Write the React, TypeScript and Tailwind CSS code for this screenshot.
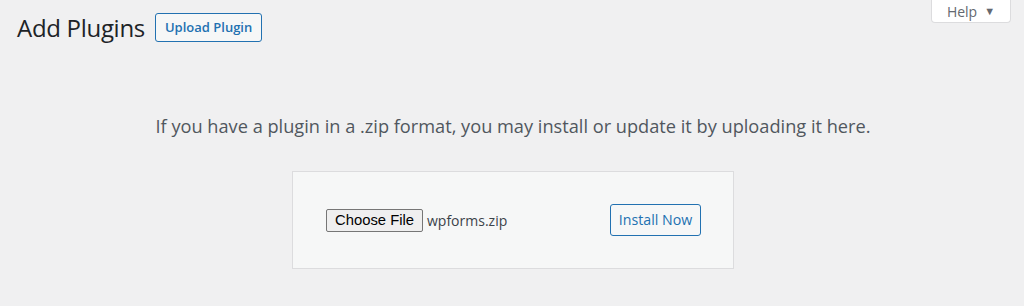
import React from 'react';

const segoe = "font-['Segoe_UI','Open_Sans',sans-serif]";

const App: React.FC = () => {
  return (
    <div className={`w-[1024px] h-[306px] overflow-hidden bg-[#f0f0f1] ${segoe}`}>
      {/* Top bar */}
      <div className="flex items-start justify-between">
        <div className="flex items-center gap-[10px] pl-[17px] pt-[13px]">
          <h1 className="text-[24px] leading-[29px] text-[#1d2327] tracking-[-0.3px]">Add Plugins</h1>
          <button className="h-[29px] px-[9px] rounded-[3px] border border-[#2271b1] bg-[#f6f7f7] text-[13px] font-semibold text-[#2271b1]">
            Upload Plugin
          </button>
        </div>
        <div className="mr-[13px] flex h-[23px] w-[80px] items-center justify-center gap-[7px] rounded-b-[4px] border border-t-0 border-[#dcdcde] bg-white text-[14px] text-[#646970]">
          <span>Help</span>
          <span className="text-[11px]">▼</span>
        </div>
      </div>

      {/* Upload panel */}
      <div className="flex flex-col items-center pt-[72px] pl-[2px]">
        <p className="text-[18.2px] leading-[24px] text-[#50575e]">
          If you have a plugin in a .zip format, you may install or update it by uploading it here.
        </p>

        <div className="mt-[33px] flex h-[98px] w-[442px] items-center justify-between border border-[#dcdcde] bg-[#f6f7f7] pl-[33px] pr-[32px]">
          <div className="flex items-center gap-[4px]">
            <span className="flex h-[23px] w-[97px] items-center justify-center rounded-[2px] border border-[#767676] bg-[#efefef] font-['Liberation_Sans',Arial,sans-serif] text-[14.8px] text-black">
              Choose File
            </span>
            <span className="text-[14px] text-[#3c434a]">wpforms.zip</span>
          </div>
          <button className="h-[32px] w-[91px] rounded-[3px] border border-[#2271b1] bg-[#f6f7f7] text-[14.2px] text-[#2271b1]">
            Install Now
          </button>
        </div>
      </div>
    </div>
  );
};

export default App;
